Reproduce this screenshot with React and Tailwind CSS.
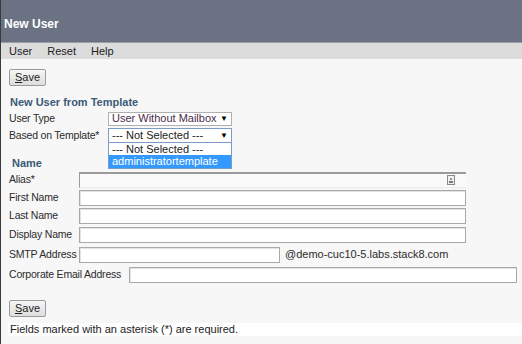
import React from "react";

function Input({ w }) {
  return (
    <div
      className={`h-[16px] bg-white border border-[#a9a9a9] shadow-[inset_1px_1px_0_#e3e3e3] shrink-0 ${w}`}
    />
  );
}

function SaveBtn() {
  return (
    <div className="ml-[8px] w-[37px] h-[17px] shrink-0 border border-[#9a9a9a] rounded-[2px] bg-gradient-to-b from-[#f6f6f6] to-[#dedede] flex items-center justify-center text-[11px] text-[#222]">
      <span><span className="underline">S</span>ave</span>
    </div>
  );
}

function Label({ w, children }) {
  return <span className={`ml-[8px] whitespace-nowrap shrink-0 text-[10.5px] tracking-[-0.2px] ${w}`}>{children}</span>;
}

export default function App() {
  return (
    <div
      className="w-[522px] h-[344px] bg-[#f7f7f7] flex flex-col overflow-hidden text-[11px] text-[#2b2b2b] border-l border-[#3a3a3a]"
      style={{ fontFamily: "'Liberation Sans', Arial, sans-serif" }}
    >
      <div className="h-[42px] bg-[#6a7283] flex items-center pl-[3px] pt-[6px] text-white font-bold text-[12px] shrink-0">
        New User
      </div>
      <div className="h-[1px] bg-[#9aa0ab] shrink-0" />
      <div className="h-[16px] bg-[#dcdcdc] flex items-center pt-[1px] text-[11px] text-[#222] shrink-0">
        <span className="ml-[8px]">User</span>
        <span className="ml-[15px]">Reset</span>
        <span className="ml-[15px]">Help</span>
      </div>
      <div className="h-[10px] shrink-0" />
      <SaveBtn />
      <div className="ml-[9px] mt-[9px] h-[14px] flex items-center font-bold text-[#3b5a78] text-[11px] shrink-0">
        New User from Template
      </div>
      <div className="relative shrink-0 mt-[1px]">
        <div className="flex items-center h-[17px]">
          <Label w="w-[99px]">User Type</Label>
          <div className="h-[14px] w-[124px] bg-white border border-[#b0b0b0] flex items-center pl-[3px] pr-[3px] text-[#4a2c4a] justify-between">
            <span>User Without Mailbox</span>
            <span className="text-[8px] text-black">▼</span>
          </div>
        </div>
        <div className="flex items-center h-[17px]">
          <Label w="w-[99px]">Based on Template*</Label>
          <div className="h-[15px] w-[124px] bg-white border border-[#7a9cc8] flex items-center pl-[3px] pr-[3px] text-[#222] justify-between">
            <span>--- Not Selected ---</span>
            <span className="text-[8px] text-black">▼</span>
          </div>
        </div>
        <div className="ml-[11px] mt-[12px] h-[14px] flex items-center font-bold text-[#3b5a78]">
          Name
        </div>
        <div className="absolute left-[107px] top-[33px] w-[124px] bg-white border border-[#7a9cc8] border-t-0 z-10">
          <div className="h-[12px] flex items-center pl-[3px] text-[#222]">--- Not Selected ---</div>
          <div className="h-[13px] flex items-center pl-[3px] bg-[#3399ff] text-white">administratortemplate</div>
        </div>
      </div>
      <div className="flex flex-col shrink-0">
        <div className="flex items-center h-[19px]">
          <Label w="w-[70px]">Alias*</Label>
          <div className="h-[16px] w-[387px] bg-[#fafafa] border-t-2 border-l border-[#9a9a9a] border-b border-b-[#ececec] flex items-center justify-end pr-[11px]">
            <div className="w-[8px] h-[10px] border border-[#8a8a8a] bg-[#f0f0f0] flex flex-col items-center justify-center gap-[1px]">
              <div className="w-[2px] h-[2px] rounded-full bg-[#777]" />
              <div className="w-[4px] h-[2px] bg-[#777]" />
            </div>
          </div>
        </div>
        <div className="flex items-center h-[18px]">
          <Label w="w-[70px]">First Name</Label>
          <Input w="w-[387px]" />
        </div>
        <div className="flex items-center h-[18px]">
          <Label w="w-[70px]">Last Name</Label>
          <Input w="w-[387px]" />
        </div>
        <div className="flex items-center h-[20px]">
          <Label w="w-[70px]">Display Name</Label>
          <Input w="w-[387px]" />
        </div>
        <div className="flex items-center h-[19px]">
          <Label w="w-[70px]">SMTP Address</Label>
          <Input w="w-[201px]" />
          <span className="ml-[5px] whitespace-nowrap">@demo-cuc10-5.labs.stack8.com</span>
        </div>
        <div className="flex items-center h-[21px]">
          <Label w="w-[120px]">Corporate Email Address</Label>
          <Input w="w-[388px]" />
        </div>
      </div>
      <div className="h-[15px] shrink-0" />
      <SaveBtn />
      <div className="h-[6px] shrink-0" />
      <div className="ml-[7px] h-[13px] bg-white flex items-center pl-[2px] text-[#222] shrink-0">
        Fields marked with an asterisk (*) are required.
      </div>
    </div>
  );
}
